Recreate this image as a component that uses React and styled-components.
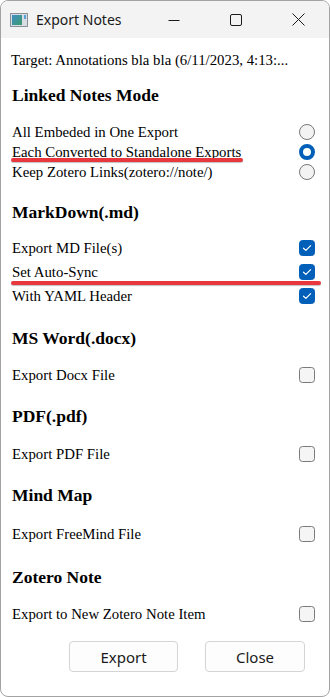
import React from "react";
import styled, { createGlobalStyle } from "styled-components";

const GlobalStyle = createGlobalStyle`
  html, body {
    margin: 0;
    padding: 0;
    background: #ffffff;
  }
`;

const Window = styled.div`
  width: 330px;
  height: 697px;
  box-sizing: border-box;
  border: 1px solid #a3a3a3;
  border-radius: 8px;
  overflow: hidden;
  display: flex;
  flex-direction: column;
  background: #ffffff;
`;

const TitleBar = styled.div`
  height: 37px;
  flex-shrink: 0;
  background: #f3f3f3;
  display: flex;
  align-items: center;
  padding-left: 9px;
  font-family: "Noto Sans", "Open Sans", sans-serif;
  font-size: 14px;
  color: #1a1a1a;
`;

const AppIcon = styled.svg`
  width: 18px;
  height: 16px;
  margin-right: 8px;
`;

const Title = styled.span`
  flex: 1;
`;

const ChromeButton = styled.div`
  width: 62px;
  height: 37px;
  display: flex;
  align-items: center;
  justify-content: center;
  color: #1a1a1a;
`;

const Body = styled.div`
  flex: 1;
  display: flex;
  flex-direction: column;
  padding: 12px 15px 0 10px;
  font-family: "Liberation Serif", "Times New Roman", serif;
  color: #000;
`;

const Target = styled.div`
  font-size: 14.8px;
  line-height: 20px;
  margin-bottom: 14px;
  white-space: nowrap;
`;

const Section = styled.div`
  display: flex;
  flex-direction: column;
  margin-bottom: ${(p) => p.gap || 19}px;
`;

const Heading = styled.div`
  font-weight: 700;
  font-size: 17.5px;
  line-height: 22px;
  padding-left: 1px;
  margin-bottom: ${(p) => p.space || 14}px;
`;

const Row = styled.div`
  position: relative;
  display: flex;
  align-items: center;
  justify-content: space-between;
  height: ${(p) => p.h || 24}px;
  font-size: 14.8px;
  padding-left: 1px;
`;

const Mark = styled.span`
  position: absolute;
  left: 0;
  width: ${(p) => p.w}px;
  top: ${(p) => p.top}px;
  height: 4px;
  border-radius: 2px;
  background: #e8383d;
  box-shadow: 0 1px 1px rgba(0, 0, 0, 0.25);
`;

const Radio = styled.span`
  width: 16px;
  height: 16px;
  box-sizing: border-box;
  border-radius: 50%;
  border: ${(p) => (p.checked ? "4.5px solid #005fb8" : "1px solid #777")};
  background: ${(p) => (p.checked ? "#fff" : "#f3f3f3")};
  margin-right: -1px;
`;

const Box = styled.span`
  width: 16px;
  height: 16px;
  box-sizing: border-box;
  border-radius: 3.5px;
  border: 1px solid ${(p) => (p.checked ? "#005fb8" : "#7a7a7a")};
  background: ${(p) => (p.checked ? "#005fb8" : "#f5f5f5")};
  display: flex;
  align-items: center;
  justify-content: center;
  margin-right: -1px;
`;

const Footer = styled.div`
  display: flex;
  justify-content: flex-end;
  gap: 27px;
  padding-right: 9px;
  margin-top: -4px;
`;

const Button = styled.button`
  width: ${(p) => p.w}px;
  height: 31px;
  border: 1px solid #d4d4d4;
  border-radius: 4px;
  background: #fdfdfd;
  font-family: "Noto Sans", "Open Sans", sans-serif;
  font-size: 15px;
  color: #1a1a1a;
  padding: 0;
`;

const Check = () => (
  <svg width="10" height="8" viewBox="0 0 10 8">
    <path d="M1.5 4.2 L3.9 6.4 L8.6 1.6" fill="none" stroke="#fff" strokeWidth="1.2" strokeLinecap="round" strokeLinejoin="round" />
  </svg>
);

const CheckRow = ({ label, checked, mark }) => (
  <Row>
    <span>{label}</span>
    <Box checked={checked}>{checked && <Check />}</Box>
    {mark}
  </Row>
);

const RadioRow = ({ label, checked, mark }) => (
  <Row h={20}>
    <span>{label}</span>
    <Radio checked={checked} />
    {mark}
  </Row>
);

export default function App() {
  return (
    <>
      <GlobalStyle />
      <Window>
        <TitleBar>
          <AppIcon viewBox="0 0 18 16">
            <defs>
              <linearGradient id="ic" x1="0" y1="0" x2="1" y2="1">
                <stop offset="0" stopColor="#3f8fc8" />
                <stop offset="1" stopColor="#3b9b6a" />
              </linearGradient>
            </defs>
            <rect x="0.5" y="1.5" width="17" height="13" fill="#d8dde3" stroke="#8a9098" />
            <rect x="2" y="3" width="10" height="10" fill="url(#ic)" />
            <rect x="14" y="3" width="2" height="4" fill="#5aa0d8" />
          </AppIcon>
          <Title>Export Notes</Title>
          <ChromeButton>
            <svg width="12" height="12" viewBox="0 0 12 12">
              <path d="M0.5 6.5 H11.5" stroke="#1a1a1a" strokeWidth="1" />
            </svg>
          </ChromeButton>
          <ChromeButton>
            <svg width="12" height="12" viewBox="0 0 12 12">
              <rect x="0.5" y="0.5" width="11" height="11" rx="1.5" fill="none" stroke="#1a1a1a" strokeWidth="1" />
            </svg>
          </ChromeButton>
          <ChromeButton>
            <svg width="13" height="13" viewBox="0 0 13 13">
              <path d="M0.5 0.5 L12.5 12.5 M12.5 0.5 L0.5 12.5" stroke="#1a1a1a" strokeWidth="1" />
            </svg>
          </ChromeButton>
        </TitleBar>
        <Body>
          <Target>Target: Annotations bla bla (6/11/2023, 4:13:...</Target>

          <Section>
            <Heading space={16}>Linked Notes Mode</Heading>
            <RadioRow label="All Embeded in One Export" />
            <RadioRow
              label="Each Converted to Standalone Exports"
              checked
              mark={<Mark w={232} top={16} />}
            />
            <RadioRow label="Keep Zotero Links(zotero://note/)" />
          </Section>

          <Section>
            <Heading space={13}>MarkDown(.md)</Heading>
            <CheckRow label="Export MD File(s)" checked />
            <CheckRow label="Set Auto-Sync" checked mark={<Mark w={310} top={21} />} />
            <CheckRow label="With YAML Header" checked />
          </Section>

          <Section gap={18}>
            <Heading>MS Word(.docx)</Heading>
            <CheckRow label="Export Docx File" />
          </Section>

          <Section gap={18}>
            <Heading space={15}>PDF(.pdf)</Heading>
            <CheckRow label="Export PDF File" />
          </Section>

          <Section gap={20}>
            <Heading space={16}>Mind Map</Heading>
            <CheckRow label="Export FreeMind File" />
          </Section>

          <Section>
            <Heading>Zotero Note</Heading>
            <CheckRow label="Export to New Zotero Note Item" />
          </Section>

          <Footer>
            <Button w={109}>Export</Button>
            <Button w={100}>Close</Button>
          </Footer>
        </Body>
      </Window>
    </>
  );
}
